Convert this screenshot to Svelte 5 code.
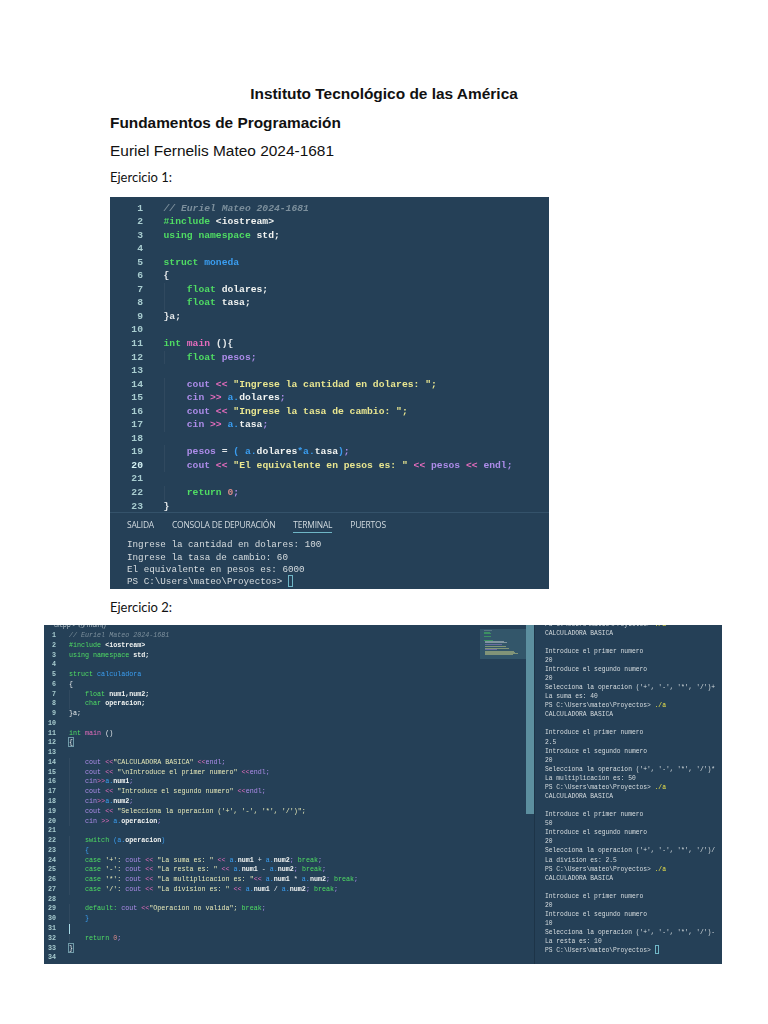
<script lang="ts">
	// [x|text] marks a coloured token, x being the class suffix
	const first = [
		'[c|// Euriel Mateo 2024-1681]',
		'[k|#include] [w|<iostream>]',
		'[k|using namespace] [w|std;]',
		'',
		'[k|struct] [b|moneda]',
		'[p|{]',
		'    [k|float] [w|dolares;]',
		'    [k|float] [w|tasa;]',
		'[p|}a;]',
		'',
		'[k|int] [m|main] [p|(){]',
		'    [k|float] [v|pesos;]',
		'',
		'    [v|cout] [m|<<] [s|"Ingrese la cantidad en dolares: ";]',
		'    [v|cin] [m|>>] [b|a.][w|dolares][v|;]',
		'    [v|cout] [m|<<] [s|"Ingrese la tasa de cambio: ";]',
		'    [v|cin] [m|>>] [b|a.][w|tasa][v|;]',
		'',
		'    [v|pesos] [p|=] [b|( a.][w|dolares][b|*a.][w|tasa][b|)][v|;]',
		'    [v|cout] [m|<<] [s|"El equivalente en pesos es: "] [m|<<] [v|pesos] [m|<<] [v|endl;]',
		'',
		'    [k|return] [n|0][v|;]',
		'[p|}]'
	];

	const second = [
		'[c|// Euriel Mateo 2024-1681]',
		'[k|#include] [w|<iostream>]',
		'[k|using namespace] [w|std;]',
		'',
		'[k|struct] [b|calculadora]',
		'[p|{]',
		'    [k|float] [w|num1,num2;]',
		'    [k|char] [w|operacion;]',
		'[p|}a;]',
		'',
		'[k|int] [m|main] [p|()]',
		'[box|{]',
		'',
		'    [v|cout] [m|<<][s|"CALCULADORA BASICA"] [m|<<][v|endl;]',
		'    [v|cout] [m|<<] [s|"\\nIntroduce el primer numero"] [m|<<][v|endl;]',
		'    [v|cin][m|>>][b|a.][w|num1][v|;]',
		'    [v|cout] [m|<<] [s|"Introduce el segundo numero"] [m|<<][v|endl;]',
		'    [v|cin][m|>>][b|a.][w|num2][v|;]',
		"    [v|cout] [m|<<] [s|\"Selecciona la operacion ('+', '-', '*', '/')\";]",
		'    [v|cin] [m|>>] [b|a.][w|operacion][v|;]',
		'',
		'    [k|switch] [b|(a.][w|operacion][b|)]',
		'    [b|{]',
		"    [k|case] [s|'+':] [v|cout] [m|<<] [s|\"La suma es: \"] [m|<<] [b|a.][w|num1] [p|+] [b|a.][w|num2][v|;] [k|break][v|;]",
		"    [k|case] [s|'-':] [v|cout] [m|<<] [s|\"La resta es: \"] [m|<<] [b|a.][w|num1] [p|-] [b|a.][w|num2][v|;] [k|break][v|;]",
		"    [k|case] [s|'*':] [v|cout] [m|<<] [s|\"La multiplicacion es: \"][m|<<] [b|a.][w|num1] [p|*] [b|a.][w|num2][v|;] [k|break][v|;]",
		"    [k|case] [s|'/':] [v|cout] [m|<<] [s|\"La division es: \"] [m|<<] [b|a.][w|num1] [p|/] [b|a.][w|num2][v|;] [k|break][v|;]",
		'',
		'    [k|default:] [v|cout] [m|<<][s|"Operacion no valida";] [k|break][v|;]',
		'    [b|}]',
		'[cur| ]',
		'    [k|return] [n|0][v|;]',
		'[box|}]',
		''
	];

	const prompt = 'PS C:\\Users\\mateo\\Proyectos>';
	const ask = "Selecciona la operacion ('+', '-', '*', '/')";
	const round = (sign: string, result: string, a: string, b: string) => [
		'CALCULADORA BASICA',
		'',
		'Introduce el primer numero',
		a,
		'Introduce el segundo numero',
		b,
		ask + sign,
		result
	];
	const run = prompt + ' [y|./a]';
	const output = [
		run,
		...round('+', 'La suma es: 40', '20', '20'),
		run,
		...round('*', 'La multiplicacion es: 50', '2.5', '20'),
		run,
		...round('/', 'La division es: 2.5', '50', '20'),
		run,
		...round('-', 'La resta es: 10', '20', '10'),
		prompt + ' [cursor| ]'
	];

	const tabs = ['SALIDA', 'CONSOLA DE DEPURACIÓN', 'TERMINAL', 'PUERTOS'];
	const console1 = [
		'Ingrese la cantidad en dolares: 100',
		'Ingrese la tasa de cambio: 60',
		'El equivalente en pesos es: 6000',
		prompt + ' [cursor| ]'
	];

	// tiny code preview: x, y, width, colour
	const minimap = [
		[4, 1, 8, '#8aa0a8'], [4, 3, 6, '#4ade5a'], [4, 4, 7, '#4ade5a'], [4, 7, 7, '#4ade5a'],
		[4, 11, 9, '#4ade5a'], [5, 12, 19, '#e8e8e8'], [5, 13, 22, '#e8e8e8'], [5, 15, 17, '#b08be8'],
		[5, 17, 21, '#e8e58c'], [5, 19, 24, '#e8e58c'], [5, 20, 12, '#b08be8'], [5, 22, 29, '#e8e58c'],
		[5, 23, 30, '#e8e58c'], [5, 24, 33, '#e8e58c'], [5, 25, 28, '#e8e58c']
	] as const;

	function tokens(line: string) {
		return line.split(/(\[\w+\|[^\]]*\])/).map((part) => {
			const m = part.match(/^\[(\w+)\|([^\]]*)\]$/);
			return m ? { cls: m[1], text: m[2] } : { cls: '', text: part };
		});
	}
</script>

{#snippet code(line: string)}
	{#each tokens(line) as t}<span class={t.cls}>{t.text}</span>{/each}
{/snippet}

<main class="doc">
	<h1>Instituto Tecnológico de las América</h1>
	<h2>Fundamentos de Programación</h2>
	<p class="author">Euriel Fernelis Mateo 2024-1681</p>
	<p class="label">Ejercicio 1:</p>

	<section class="shot one">
		<div class="lines">
			{#each first as line, i}
				<div class="row" class:hot={i === 19}>
					<span class="ln">{i + 1}</span>
					<span class="src" class:ind={line.startsWith('    ')}>{@render code(line)}</span>
				</div>
			{/each}
		</div>
		<div class="panel">
			<nav class="tabs">
				{#each tabs as tab}
					<span class:active={tab === 'TERMINAL'}>{tab}</span>
				{/each}
			</nav>
			{#each console1 as line}
				<div class="out">{@render code(line)}</div>
			{/each}
		</div>
	</section>

	<p class="label second-label">Ejercicio 2:</p>

	<section class="shot two">
		<div class="editor">
			<div class="crumbs">ulcpp &gt; ⓜ main()</div>
			{#each second as line, i}
				<div class="row">
					<span class="ln">{i + 1}</span>
					<span class="src" class:ind={line.startsWith('    ')}>{@render code(line)}</span>
				</div>
			{/each}
		</div>
		<div class="map">
			<svg width="46" height="30" viewBox="0 0 46 30">
				<rect width="46" height="30" fill="#33566a" />
				{#each minimap as [x, y, w, color]}
					<rect {x} {y} width={w} height="0.8" fill={color} opacity="0.55" />
				{/each}
			</svg>
		</div>
		<div class="scroll"><div class="thumb"></div></div>
		<div class="term">
			{#each output as line}
				<div class="out">{@render code(line)}</div>
			{/each}
		</div>
	</section>
</main>

<style>
	:global(body) {
		background: #fff;
	}

	.doc {
		height: 1024px;
		overflow: hidden;
		padding: 84px 46px 0 44px;
		box-sizing: border-box;
		color: #111;
		font-family: 'Liberation Sans', Arial, sans-serif;
	}

	h1 {
		margin: 0 0 0 2px;
		height: 20px;
		font-size: 15.45px;
		line-height: 20px;
		text-align: center;
	}

	h2 {
		margin: 9px 0 0 66px;
		height: 20px;
		font-size: 15.4px;
		line-height: 20px;
	}

	.author {
		margin: 8px 0 0 66px;
		height: 20px;
		font-size: 15.45px;
		line-height: 20px;
	}

	.label {
		margin: 6px 0 0 66px;
		height: 20px;
		font-family: Lato, 'Open Sans', sans-serif;
		font-size: 13px;
		line-height: 20px;
	}

	.second-label {
		margin-top: 8px;
	}

	.shot {
		background: #254057;
		color: #dfe6ea;
		font-family: 'Liberation Mono', 'DejaVu Sans Mono', monospace;
		overflow: hidden;
	}

	.one {
		margin: 10px 0 0 66px;
		width: 439px;
		height: 392px;
		padding-top: 4.5px;
		box-sizing: border-box;
		filter: blur(0.35px);
	}

	.two {
		display: grid;
		grid-template-columns: 436px 46px 9px 1fr;
		margin-top: 8px;
		height: 339px;
		filter: blur(0.45px);
	}

	.row {
		display: flex;
		white-space: pre;
	}

	.one .row {
		height: 13.55px;
		font-size: 9.7px;
		font-weight: 700;
		line-height: 13.55px;
	}

	.one .ln {
		width: 33px;
		margin-right: 20.5px;
		text-align: right;
		color: #a9cdd0;
	}

	.one .hot .ln {
		color: #d6f3f5;
	}

	.src {
		flex: 1;
	}

	.ind {
		box-shadow: inset 1px 0 #ffffff0d;
	}

	.panel {
		margin-top: -1px;
		padding: 3.5px 0 0 17px;
		border-top: 1px solid #34526a;
	}

	.tabs {
		display: flex;
		gap: 18px;
		margin-bottom: 6.5px;
		font-family: 'Open Sans', Lato, sans-serif;
		font-size: 8.45px;
		letter-spacing: -0.2px;
		line-height: 15px;
		color: #d3dbe0;
	}

	.tabs span {
		border-bottom: 1px solid transparent;
	}

	.tabs .active {
		border-bottom-color: #6fb6c6;
	}

	.panel .out {
		height: 12.45px;
		font-size: 9.25px;
		line-height: 12.45px;
		white-space: pre;
		color: #d6dcdf;
	}

	.editor {
		min-width: 0;
		overflow: hidden;
	}

	.crumbs {
		height: 7px;
		margin-top: -1px;
		padding-left: 10px;
		font-family: 'Open Sans', sans-serif;
		font-size: 6.5px;
		line-height: 1px;
		color: #b9c6cc;
	}

	.two .row {
		height: 9.78px;
		font-size: 6.7px;
		line-height: 9.78px;
	}

	.two .ln {
		width: 12px;
		margin-right: 13px;
		text-align: right;
		font-weight: 700;
		color: #a9cdd0;
	}

	.two .w {
		font-weight: 700;
	}

	.map {
		padding-top: 4px;
		line-height: 0;
	}

	.scroll {
		box-shadow: inset -1px 0 #1d3448;
	}

	.thumb {
		width: 8px;
		height: 189px;
		background: #5c8f9f;
	}

	.term {
		padding: 0 0 0 10px;
		margin-top: -5.5px;
		overflow: hidden;
	}

	.term .out {
		height: 9.09px;
		font-size: 6.3px;
		line-height: 9.09px;
		white-space: pre;
		color: #d6dcdf;
	}

	.c {
		color: #7c8f9c;
		font-style: italic;
	}

	.k {
		color: #4fdc63;
	}

	.w {
		color: #f2f4f2;
	}

	.b {
		color: #3a9df0;
	}

	.m {
		color: #e56cbd;
	}

	.v {
		color: #ad8ce9;
	}

	.s {
		color: #e9e690;
	}

	.two .s {
		color: #e6e8b8;
	}

	.n {
		color: #d98a8a;
	}

	.p {
		color: #e4e8ea;
	}

	.y {
		color: #e8e04a;
	}

	.box {
		outline: 1px solid #6f9aa8;
		color: #e4e8ea;
	}

	.cur {
		display: inline-block;
		width: 1px;
		height: 100%;
		background: #a9dce8;
	}

	.cursor {
		display: inline-block;
		box-sizing: border-box;
		width: 5px;
		height: 12px;
		margin-top: -2px;
		vertical-align: middle;
		border: 1px solid #6fb6c6;
	}

	.term .cursor {
		width: 4px;
		height: 9px;
	}
</style>
